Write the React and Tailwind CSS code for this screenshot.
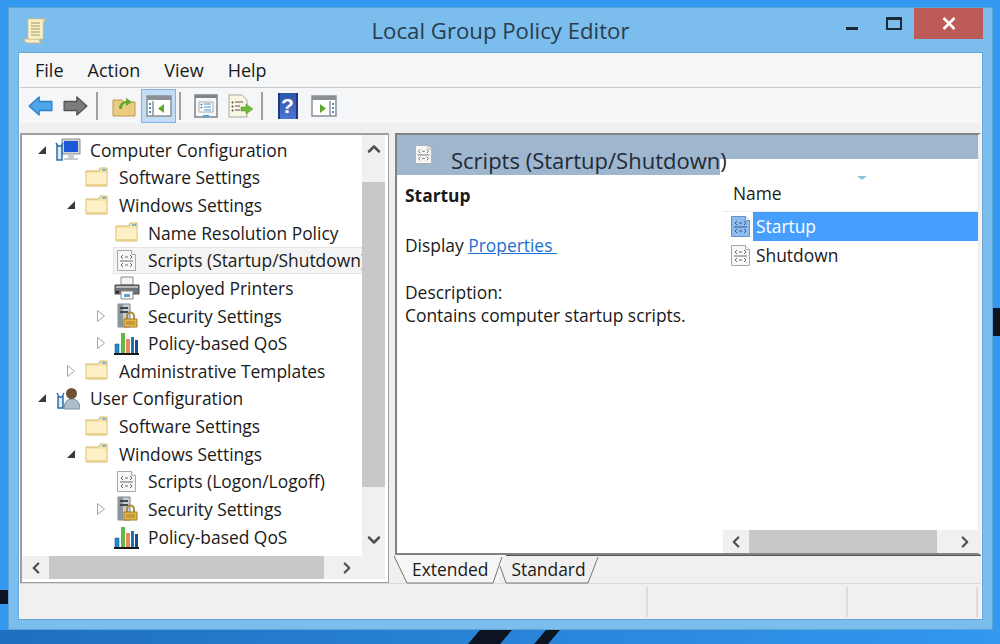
import { ChevronUp, ChevronDown, ChevronLeft, ChevronRight } from "lucide-react";

const font = "font-['Open_Sans','Noto_Sans',sans-serif]";

function Folder({ className = "" }) {
  return (
    <svg width="23" height="21" viewBox="0 0 23 21" className={className}>
      <path d="M1 4 h13 l1-3 h7 v18 h-21 z" fill="#f8e6a8" stroke="#d2b66c" />
      <path d="M1.500 6 h20 v13 h-20 z" fill="#fdf0c4" />
      <path d="M1.500 17 h20 v2 h-20 z" fill="#ecd28c" />
      <path d="M17 2 h4 v2 h-4 z" fill="#7fb2dc" />
    </svg>
  );
}

function ScriptIcon({ selected = false, size = 21 }) {
  const line = selected ? "#2f5f92" : "#6a6a6a";
  return (
    <svg width={size} height={size + 2} viewBox="0 0 21 23">
      <path d="M1.500 1.500 h14 l4 4 v16 h-18 z" fill={selected ? "#8fbcec" : "#f7f7f5"} stroke={selected ? "#5f93cc" : "#a8a8a8"} />
      <path d="M15.500 1.500 v4 h4" fill="#fff" stroke={selected ? "#5f93cc" : "#a8a8a8"} />
      <path d="M7 6 l-2 2 l2 2 M14 6 l2 2 l-2 2 M9 8 h3 M7 14 l-2 2 l2 2 M14 14 l2 2 l-2 2 M9 16 h3 M4 12 h13" fill="none" stroke={line} strokeWidth="1" />
    </svg>
  );
}

function Printer() {
  return (
    <svg width="26" height="24" viewBox="0 0 26 24">
      <path d="M7 1 h12 v8 h-12 z" fill="#f4f4f4" stroke="#8a8a8a" />
      <path d="M1 9 h24 v9 h-24 z" fill="#6f7276" stroke="#45484c" />
      <path d="M2 10 h22 v2 h-22 z" fill="#b6b9bc" />
      <path d="M7 15 h12 v8 h-12 z" fill="#f7f7f7" stroke="#8a8a8a" />
      <path d="M10 18 h6 v3 h-6 z" fill="#5fa3cf" />
      <path d="M2 15 h3 v2 h-3 z" fill="#2a2a2a" />
    </svg>
  );
}

function SecurityIcon() {
  return (
    <svg width="22" height="25" viewBox="0 0 22 25">
      <path d="M2 1 h12 v23 h-12 z" fill="#c9ced4" stroke="#7d848c" />
      <path d="M2 1 h5 v23 h-5 z" fill="#8c949c" />
      <path d="M4 4 h8 v2 h-8 z M4 8 h8 v2 h-8 z" fill="#454a50" />
      <path d="M10 13 a4.500 4.500 0 0 1 9 0 v3 h-2 v-3 a2.500 2.500 0 0 0 -5 0 v3 h-2 z" fill="#a98a3e" />
      <path d="M8 16 h13 v8 h-13 z" fill="#e8b64c" stroke="#a07c28" />
      <path d="M10 19 h9 M10 21 h9" stroke="#a07c28" />
    </svg>
  );
}

function QosIcon() {
  return (
    <svg width="25" height="24" viewBox="0 0 25 24">
      <path d="M1 13 h4 v10 h-4 z" fill="#1f8ad0" stroke="#0f4f7d" strokeWidth=".5" />
      <path d="M7 2 h4 v21 h-4 z" fill="#62b84a" />
      <path d="M12 8 h4 v15 h-4 z" fill="#ea8a5c" />
      <path d="M17 6 h3 v17 h-3 z" fill="#1f6fb8" />
      <path d="M21 9 h3 v14 h-3 z" fill="#174f8c" />
      <path d="M0 22 h25 v2 h-25 z" fill="#1a1a1a" />
    </svg>
  );
}

function ComputerIcon() {
  return (
    <svg width="26" height="24" viewBox="0 0 26 24">
      <path d="M7 1 h18 v15 h-18 z" fill="#cfd3d7" stroke="#8a8f94" />
      <path d="M9 3 h14 v11 h-14 z" fill="#1c58d8" />
      <path d="M13 16 h6 v4 h4 v2 h-14 v-2 h4 z" fill="#c6cacd" />
      <path d="M2 8 h5 v14 h-5 z" fill="#dbeaf6" stroke="#2d6ea8" strokeWidth="1.500" />
      <path d="M1 5 l2 3 M8 5 l-2 3" stroke="#2d6ea8" strokeWidth="1.500" />
    </svg>
  );
}

function UserIcon() {
  return (
    <svg width="24" height="24" viewBox="0 0 24 24">
      <path d="M8 23 q0-10 8-10 q8 0 8 10 z" fill="#aebdcb" stroke="#7d8d9c" />
      <circle cx="15.500" cy="7.500" r="5.500" fill="#6d5238" />
      <path d="M2 11 h5 v11 h-5 z" fill="#dbeaf6" stroke="#2d6ea8" strokeWidth="1.500" />
      <path d="M1 7 l2 4 M8 7 l-2 4" stroke="#2d6ea8" strokeWidth="1.500" />
    </svg>
  );
}

function Arrow({ open }) {
  if (open) {
    return (
      <svg width="10" height="10" viewBox="0 0 10 10">
        <path d="M9 1 v8 h-8 z" fill="#3a3a3a" />
      </svg>
    );
  }
  return (
    <svg width="10" height="14" viewBox="0 0 10 14">
      <path d="M1.500 1.500 l7 5.500 l-7 5.500 z" fill="#fff" stroke="#a6a6a6" />
    </svg>
  );
}

const treeRows = [
  { label: "Computer Configuration", level: 0, arrow: "open", icon: <ComputerIcon /> },
  { label: "Software Settings", level: 1, icon: <Folder /> },
  { label: "Windows Settings", level: 1, arrow: "open", icon: <Folder /> },
  { label: "Name Resolution Policy", level: 2, icon: <Folder /> },
  { label: "Scripts (Startup/Shutdown)", level: 2, icon: <ScriptIcon />, active: true },
  { label: "Deployed Printers", level: 2, icon: <Printer /> },
  { label: "Security Settings", level: 2, arrow: "closed", icon: <SecurityIcon /> },
  { label: "Policy-based QoS", level: 2, arrow: "closed", icon: <QosIcon /> },
  { label: "Administrative Templates", level: 1, arrow: "closed", icon: <Folder /> },
  { label: "User Configuration", level: 0, arrow: "open", icon: <UserIcon /> },
  { label: "Software Settings", level: 1, icon: <Folder /> },
  { label: "Windows Settings", level: 1, arrow: "open", icon: <Folder /> },
  { label: "Scripts (Logon/Logoff)", level: 2, icon: <ScriptIcon /> },
  { label: "Security Settings", level: 2, arrow: "closed", icon: <SecurityIcon /> },
  { label: "Policy-based QoS", level: 2, icon: <QosIcon /> },
];

const levelPad = ["pl-[13px]", "pl-[42px]", "pl-[72px]"];
const labelPad = ["ml-[9px]", "ml-[9px]", "ml-[8px]"];

function TreeRow({ row }) {
  return (
    <div className={`relative flex h-[27.640px] items-center ${levelPad[row.level]}`}>
      {row.active && (
        <div className="absolute bottom-0 left-[91px] right-0 top-0 border border-r-0 border-[#e4e4e4] bg-[#f4f4f4]" />
      )}
      <span className="relative flex w-[19px] shrink-0 pl-[2px]">
        {row.arrow && <Arrow open={row.arrow === "open"} />}
      </span>
      <span className="relative flex w-[27px] shrink-0 justify-center">{row.icon}</span>
      <span className={`relative flex-1 overflow-hidden whitespace-nowrap ${labelPad[row.level]}`}>
        {row.label}
      </span>
    </div>
  );
}

function ToolIcon({ children, active = false }) {
  return (
    <span
      className={`flex h-[34px] w-[35px] items-center justify-center ${
        active ? "border border-[#7fb3e6] bg-[#c3dcf5]" : ""
      }`}
    >
      {children}
    </span>
  );
}

function Sep() {
  return <span className="mx-[3px] h-[28px] w-[2px] bg-[#a0a0a0]" />;
}

function WindowGlyph({ side }) {
  return (
    <svg width="26" height="22" viewBox="0 0 26 22">
      <path d="M1 1 h24 v20 h-24 z" fill="#fff" stroke="#8a9096" strokeWidth="1.500" />
      <path d="M1 1 h24 v4 h-24 z" fill="#8a9096" />
      <path d={side === "left" ? "M7 6 v15" : "M19 6 v15"} stroke="#8a9096" strokeWidth="1.500" />
      {side === "left" ? (
        <>
          <path d="M3 8 h2 v2 h-2 z M3 12 h2 v2 h-2 z M3 16 h2 v2 h-2 z" fill="#4b8fd0" />
          <path d="M18 9 v9 l-6-4.500 z" fill="#5fa82e" />
        </>
      ) : (
        <>
          <path d="M21 8 h2 v2 h-2 z M21 12 h2 v2 h-2 z M21 16 h2 v2 h-2 z" fill="#4b8fd0" />
          <path d="M9 9 v9 l6-4.500 z" fill="#5fa82e" />
        </>
      )}
    </svg>
  );
}

function Toolbar() {
  return (
    <div className="flex h-[35px] items-center bg-[#f5f6f7] pl-[3px]">
      <ToolIcon>
        <svg width="25" height="20" viewBox="0 0 27 22">
          <path d="M12 1 v5 h14 v10 h-14 v5 l-11-10 z" fill="#4fa6ea" stroke="#2f7fc4" strokeWidth="1.500" strokeLinejoin="round" />
        </svg>
      </ToolIcon>
      <ToolIcon>
        <svg width="25" height="20" viewBox="0 0 27 22">
          <path d="M15 1 v5 h-14 v10 h14 v5 l11-10 z" fill="#7c7c7c" stroke="#555" strokeWidth="1.500" strokeLinejoin="round" />
        </svg>
      </ToolIcon>
      <Sep />
      <span className="w-[5px]" />
      <ToolIcon>
        <svg width="24" height="23" viewBox="0 0 24 23">
          <path d="M1 6 h9 l2 2 h11 v14 h-22 z" fill="#eccb80" stroke="#b99a50" />
          <path d="M7 15 q0-7 7-8 v-3 l6 4 l-6 4 v-3 q-4 1-4 6 z" fill="#5fa82e" />
        </svg>
      </ToolIcon>
      <ToolIcon active>
        <WindowGlyph side="left" />
      </ToolIcon>
      <Sep />
      <span className="w-[4px]" />
      <ToolIcon>
        <svg width="24" height="24" viewBox="0 0 24 24">
          <path d="M1 1 h22 v22 h-22 z" fill="#f6f6f6" stroke="#7f8488" strokeWidth="1.500" />
          <path d="M1 1 h22 v3 h-22 z" fill="#7f8488" />
          <path d="M5 8 h14 v10 h-14 z" fill="#fff" stroke="#a8adb2" />
          <path d="M7 10 h1 v1 h-1 z M7 13 h1 v1 h-1 z M10 10 h7 M10 13 h7 M10 16 h7" stroke="#4b8fd0" />
          <path d="M9 21 h6 v2 h-6 z" fill="#4ba3e0" />
        </svg>
      </ToolIcon>
      <ToolIcon>
        <svg width="26" height="24" viewBox="0 0 26 24">
          <path d="M1 1 h13 l5 5 v17 h-18 z" fill="#f9f6e4" stroke="#a8a8a0" />
          <path d="M4 8 h1 v1 h-1 z M4 12 h1 v1 h-1 z M4 16 h1 v1 h-1 z M7 8 h8 M7 12 h5 M7 16 h5" stroke="#555" />
          <path d="M13 13 h5 v-3 l7 5 l-7 5 v-3 h-5 z" fill="#6fbb3a" stroke="#4a8f22" strokeWidth=".5" />
        </svg>
      </ToolIcon>
      <Sep />
      <span className="w-[4px]" />
      <ToolIcon>
        <span className="flex h-[26px] w-[20px] items-center justify-center border-x-2 border-[#1f3a80] bg-gradient-to-b from-[#2f55ad] to-[#4a76cf] font-['Liberation_Sans',sans-serif] text-[21px] font-bold leading-none text-white">
          ?
        </span>
      </ToolIcon>
      <span className="w-[1px]" />
      <ToolIcon>
        <WindowGlyph side="right" />
      </ToolIcon>
    </div>
  );
}

function ScrollBtn({ children }) {
  return <span className="flex items-center justify-center text-[#505050]">{children}</span>;
}

export default function App() {
  return (
    <div className={`relative h-[644px] w-[1000px] overflow-hidden bg-[#3298f0] ${font} text-[17.400px] text-[#1a1a1a]`}>
      {/* desktop wallpaper bits behind the window */}
      <div className="absolute inset-x-0 bottom-0 h-[14px] bg-gradient-to-r from-[#1f6fbf] to-transparent" />
      <div className="absolute bottom-0 left-[474px] h-[14px] w-[32px] -skew-x-[40deg] bg-[#0b1420]" />
      <div className="absolute bottom-0 left-[540px] h-[14px] w-[14px] -skew-x-[40deg] bg-[#0b1420]" />
      <div className="absolute left-[993px] top-[308px] h-[28px] w-[7px] bg-[#0b1420]" />
      <div className="absolute left-0 top-[590px] h-[14px] w-[8px] bg-[#0b1420]" />

      <div className="relative ml-[8px] mt-[7px] flex h-[623px] w-[985px] flex-col border border-[#5fa3d6] bg-[#7bbdec] px-[10px] pb-[10px]">
        {/* title bar */}
        <div className="relative flex h-[45px] shrink-0 items-center justify-center text-[#2a3c4c]">
          <span className="pt-[1px] text-[22.200px]">Local Group Policy Editor</span>
          <svg width="24" height="26" viewBox="0 0 24 26" className="absolute left-[4px] top-[10px]">
            <path d="M5 1 h17 l-1 4 h-1 v16 h-19 q0 3 3 4 h15 q-3-1-3-4" fill="#f4eecb" stroke="#c9b888" />
            <path d="M5 1 v20 h15 v-20 z" fill="#f7efc6" stroke="#c9b888" strokeWidth=".5" />
            <path d="M8 5 h9 M8 8 h9 M8 11 h9 M8 14 h9 M8 17 h9" stroke="#a89868" />
          </svg>
          <span className="absolute left-[827px] top-[19px] h-[3px] w-[12px] bg-[#1d2a33]" />
          <span className="absolute left-[867px] top-[9px] h-[13px] w-[16px] border-2 border-t-[3px] border-[#1d2a33]" />
          <span className="absolute left-[895px] top-0 flex h-[31px] w-[69px] items-center justify-center bg-[#bd5c57] text-white">
            <svg width="14" height="13" viewBox="0 0 14 13">
              <path d="M1.500 1 L12.500 12 M12.500 1 L1.500 12" stroke="#fff" strokeWidth="2.500" />
            </svg>
          </span>
        </div>

        {/* client area */}
        <div className="flex h-[568px] w-[963px] flex-col border-x border-t border-[#f7f8f9] bg-[#f0f0f0] shadow-[0_0_0_1px_#6aa6d4]">
          <div className="flex h-[34px] shrink-0 items-center gap-[24px] border-b border-[#c9c9c9] bg-[#f5f6f7] pl-[15px] text-[18px]">
            <span>File</span>
            <span>Action</span>
            <span>View</span>
            <span>Help</span>
          </div>
          <Toolbar />

          <div className="h-[10px] shrink-0 bg-[#f0f0f0]" />

          {/* panes */}
          <div className="flex h-[450px] shrink-0">
            {/* tree */}
            <div className="flex h-[450px] w-[369px] shrink-0 flex-col border-2 border-b border-r border-[#9a9fa3] bg-white pb-[3px] pr-[3px]">
              <div className="flex min-h-0 flex-1">
                <div className="min-w-0 flex-1 overflow-hidden pt-[1px]">
                  {treeRows.map((row, i) => (
                    <TreeRow key={i} row={row} />
                  ))}
                </div>
                <div className="flex w-[23px] shrink-0 flex-col bg-[#f0f0f0]">
                  <ScrollBtn>
                    <ChevronUp size={20} strokeWidth={3} className="my-[4px]" />
                  </ScrollBtn>
                  <div className="mt-[19px] h-[305px] w-full bg-[#c8c8c8]" />
                  <div className="flex-1" />
                  <ScrollBtn>
                    <ChevronDown size={20} strokeWidth={3} className="mb-[6px] mt-[2px]" />
                  </ScrollBtn>
                </div>
              </div>
              <div className="flex h-[23px] shrink-0 items-center bg-[#f0f0f0]">
                <span className="flex w-[27px] justify-center text-[#505050]">
                  <ChevronLeft size={18} strokeWidth={3} />
                </span>
                <span className="h-[23px] w-[275px] bg-[#c8c8c8]" />
                <span className="flex w-[46px] justify-center text-[#505050]">
                  <ChevronRight size={18} strokeWidth={3} />
                </span>
                <span className="flex-1" />
              </div>
            </div>

            <div className="w-[6px] shrink-0" />

            {/* result pane */}
            <div className="flex h-[422px] flex-1 flex-col border-2 border-[#7e8388] border-r-[3px] border-r-[#f0f0f0] bg-white">
              <div className="relative h-[40px] shrink-0">
                <div className="absolute left-0 top-0 h-[24px] w-full bg-[#9fb6cf]" />
                <div className="absolute left-0 top-[24px] h-[16px] w-[323px] bg-[#9fb6cf]" />
                <div className="absolute left-[17px] top-[9px]">
                  <ScriptIcon size={19} />
                </div>
                <span className="absolute left-[54px] top-[10px] text-[22px] leading-[30px] text-[#1f2a36]">
                  Scripts (Startup/Shutdown)
                </span>
              </div>
              <div className="flex min-h-0 flex-1">
                <div className="w-[326px] shrink-0 pl-[8px] pt-[9px] leading-[23px]">
                  <div className="font-bold">Startup</div>
                  <div className="mt-[27px]">
                    Display{" "}
                    <span className="whitespace-pre text-[#1c6fd0] underline">Properties </span>
                  </div>
                  <div className="mt-[24px]">Description:</div>
                  <div>Contains computer startup scripts.</div>
                </div>
                <div className="flex min-w-0 flex-1 flex-col">
                  <div className="relative flex h-[37px] shrink-0 items-center border-b border-[#e6f0fa] pl-[10px]">
                    Name
                    <svg width="10" height="4" viewBox="0 0 10 4" className="absolute left-[134px] top-[1px]">
                      <path d="M0 0 h10 l-5 4 z" fill="#8fc1e0" />
                    </svg>
                  </div>
                  <div className="flex h-[29px] items-center pl-[7px]">
                    <ScriptIcon selected />
                    <span className="ml-[2px] flex h-[29px] flex-1 items-center border border-dotted border-[#b5824f] bg-[#469eff] pl-[2px] text-white">
                      Startup
                    </span>
                  </div>
                  <div className="flex h-[29px] items-center pl-[7px]">
                    <ScriptIcon />
                    <span className="ml-[5px]">Shutdown</span>
                  </div>
                  <div className="flex-1" />
                  <div className="flex h-[23px] shrink-0 items-center bg-[#f0f0f0]">
                    <span className="flex w-[26px] justify-center text-[#505050]">
                      <ChevronLeft size={18} strokeWidth={3} />
                    </span>
                    <span className="h-[23px] w-[188px] bg-[#c8c8c8]" />
                    <span className="flex-1" />
                    <span className="flex w-[26px] justify-center text-[#505050]">
                      <ChevronRight size={18} strokeWidth={3} />
                    </span>
                  </div>
                </div>
              </div>
            </div>
          </div>

          {/* tabs + status bar, sitting under the result pane */}
          <div className="relative -mt-[28px] ml-[374px] flex h-[28px] shrink-0 items-start border-t border-[#555] bg-[#f0f0f0]">
            <span className="-mt-[1px] flex h-[28px] items-center bg-[#f6f6f6] px-[18px] [clip-path:polygon(0_0,100%_0,calc(100%-9px)_100%,13px_100%)]">
              Extended
            </span>
            <span className="flex h-[27px] items-center pl-[5px]">Standard</span>
            <svg width="210" height="28" viewBox="0 0 210 28" className="absolute left-0 top-0" fill="none">
              <path d="M0 0 L13 27 H99 L108 1" stroke="#777" />
              <path d="M106 10 L112 27 H194 L204 1" stroke="#777" />
            </svg>
          </div>
          <div className="flex flex-1 border-t border-[#d9d9d9] bg-[#f0f0f0]">
            <div className="mb-[2px] ml-[626px] mt-[3px] w-[2px] bg-[#dcdcdc]" />
            <div className="mb-[2px] ml-[198px] mt-[3px] w-[2px] bg-[#dcdcdc]" />
            <div className="mb-[2px] ml-[128px] mt-[3px] w-[2px] bg-[#dcdcdc]" />
          </div>
        </div>
      </div>
    </div>
  );
}
